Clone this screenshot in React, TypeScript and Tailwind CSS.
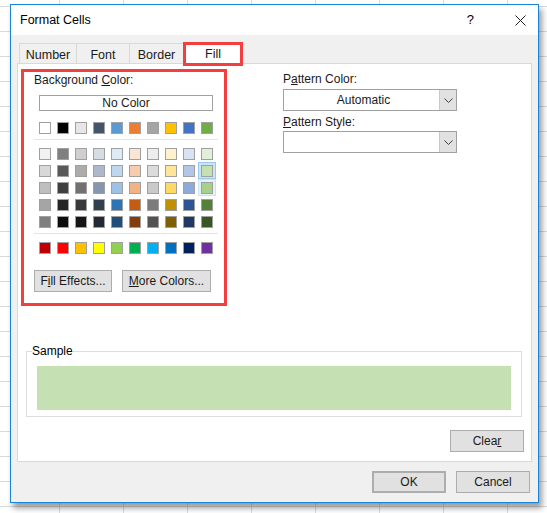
import React from "react";

const topRow = ["#ffffff", "#000000", "#e7e6e6", "#44546a", "#5b9bd5", "#ed7d31", "#a5a5a5", "#ffc000", "#4472c4", "#70ad47"];

const themeRows = [
  ["#f2f2f2", "#7f7f7f", "#d0cece", "#d6dce4", "#deebf6", "#fbe5d5", "#ededed", "#fff2cc", "#d9e2f3", "#e2efd9"],
  ["#d8d8d8", "#595959", "#aeabab", "#adb9ca", "#bdd7ee", "#f7cbac", "#dbdbdb", "#fee599", "#b4c6e7", "#c5e0b3"],
  ["#bfbfbf", "#3f3f3f", "#757070", "#8496b0", "#9cc3e5", "#f4b183", "#c9c9c9", "#ffd965", "#8eaadb", "#a8d08d"],
  ["#a5a5a5", "#262626", "#3a3838", "#323f4f", "#2e75b5", "#c55a11", "#7b7b7b", "#bf9000", "#2f5496", "#538135"],
  ["#7f7f7f", "#0c0c0c", "#171616", "#222a35", "#1e4e79", "#833c0b", "#525252", "#7f6000", "#1f3864", "#375623"],
];

const standard = ["#c00000", "#ff0000", "#ffc000", "#ffff00", "#92d050", "#00b050", "#00b0f0", "#0070c0", "#002060", "#7030a0"];

const Swatch = ({ color, state }: { color: string; state?: "selected" | "hover" }) => {
  const wrap =
    state === "selected"
      ? "bg-[#cce4f7] border-[#99c9ef]"
      : state === "hover"
      ? "bg-[#e5f1fb] border-[#cce4f7]"
      : "border-transparent";
  return (
    <div className={`w-[18px] h-[17px] flex items-center justify-center border ${wrap}`}>
      <div className="w-[12px] h-[12px] border border-[#a0a0a0]" style={{ backgroundColor: color }} />
    </div>
  );
};

const SwatchRow = ({ colors, selected, hover }: { colors: string[]; selected?: number; hover?: number }) => (
  <div className="flex ml-[12px]">
    {colors.map((c, i) => (
      <Swatch key={i} color={c} state={i === selected ? "selected" : i === hover ? "hover" : undefined} />
    ))}
  </div>
);

const Chevron = () => (
  <svg width="9" height="5" viewBox="0 0 9 5" className="block">
    <polyline points="0.5,0.5 4.5,4.5 8.5,0.5" fill="none" stroke="#404040" strokeWidth="1" />
  </svg>
);

const Select = ({ value }: { value?: string }) => (
  <div className="w-[174px] h-[22px] border border-[#a0a0a0] bg-white flex">
    <div className="flex-1 flex items-center justify-center pl-[4px]">{value}</div>
    <div className="w-[17px] bg-[#e1e1e1] border-l border-[#c8c8c8] flex items-center justify-center">
      <Chevron />
    </div>
  </div>
);

const Button = ({ children, className = "" }: { children: React.ReactNode; className?: string }) => (
  <div className={`h-[22px] bg-[#e1e1e1] border border-[#adadad] flex items-center justify-center ${className}`}>
    {children}
  </div>
);

export default function App() {
  return (
    <div className="relative w-[547px] h-[513px] overflow-hidden bg-white font-['Liberation_Sans',Arial,sans-serif] text-[12px] text-[#1a1a1a]">
      {/* spreadsheet behind */}
      <div className="absolute left-[-4px] top-[-18px] grid grid-cols-[repeat(9,64px)]">
        {Array.from({ length: 9 * 22 }).map((_, i) => (
          <div key={i} className="h-[25px] border-r border-b border-[#dadada]" />
        ))}
      </div>

      {/* dialog */}
      <div className="absolute left-[10px] top-[4px] w-[529px] h-[499px] border border-[#1883d7] bg-[#f0f0f0] flex flex-col shadow-[3px_5px_6px_rgba(0,0,0,0.4)]">
        <div className="h-[30px] bg-white flex items-center pl-[9px] shrink-0">
          <span className="text-[12.5px] text-black">Format Cells</span>
          <span className="ml-auto text-[13px] text-black mr-[41px]">?</span>
          <svg width="11" height="11" viewBox="0 0 11 11" className="mr-[12px]">
            <path d="M0.5 0.5 L10.5 10.5 M10.5 0.5 L0.5 10.5" stroke="#202020" strokeWidth="1" />
          </svg>
        </div>

        <div className="px-[6px] pt-[7px] flex flex-col">
          {/* tabs */}
          <div className="flex items-end h-[21px] pl-[2px] relative z-10">
            <div className="w-[57px] h-[20px] pt-[3px] flex items-center justify-center border-t border-l border-[#d9d9d9] text-[12.5px]">Number</div>
            <div className="w-[53px] h-[20px] pt-[3px] flex items-center justify-center border-t border-l border-[#d9d9d9] text-[12.5px]">Font</div>
            <div className="w-[55px] h-[20px] pt-[3px] flex items-center justify-center border-t border-l border-r border-[#d9d9d9] text-[12.5px]">Border</div>
            <div className="w-[60px] h-[24px] pt-[1px] -ml-[1px] mb-[-3px] bg-white border-[3px] border-[#f43f3f] flex items-center justify-center text-[12.5px]">Fill</div>
          </div>

          {/* panel */}
          <div className="h-[399px] bg-white border border-[#d9d9d9] flex flex-col">
            <div className="flex pt-[5px] pl-[3px]">
              {/* background color box */}
              <div className="w-[206px] h-[237px] border-[3px] border-[#f43f3f] flex flex-col">
                <div className="ml-[10px] mt-[1px] h-[15px] leading-[15px]">
                  Background <u>C</u>olor:
                </div>
                <div className="ml-[15px] mt-[7px] w-[174px] h-[16px] border border-[#a0a0a0] bg-white flex items-center justify-center">
                  No Color
                </div>
                <div className="mt-[8px]">
                  <SwatchRow colors={topRow} />
                </div>
                <div className="ml-[10px] mt-[3px] w-[184px] h-px bg-[#e3e3e3]" />
                <div className="mt-[5px] flex flex-col">
                  {themeRows.map((r, i) => (
                    <SwatchRow key={i} colors={r} selected={i === 1 ? 9 : undefined} hover={i === 2 ? 9 : undefined} />
                  ))}
                </div>
                <div className="ml-[10px] mt-[3px] w-[184px] h-px bg-[#e3e3e3]" />
                <div className="mt-[5px]">
                  <SwatchRow colors={standard} />
                </div>
                <div className="flex ml-[10px] mt-[14px] gap-[10px]">
                  <Button className="w-[78px]">
                    F<u>i</u>ll Effects...
                  </Button>
                  <Button className="w-[89px]">
                    <u>M</u>ore Colors...
                  </Button>
                </div>
              </div>

              {/* pattern */}
              <div className="ml-[56px] mt-[3px] flex flex-col">
                <div className="h-[15px] leading-[15px]">
                  P<u>a</u>ttern Color:
                </div>
                <div className="mt-[2px]">
                  <Select value="Automatic" />
                </div>
                <div className="mt-[4px] h-[15px] leading-[15px]">
                  <u>P</u>attern Style:
                </div>
                <div className="mt-[1px]">
                  <Select />
                </div>
              </div>
            </div>

            {/* sample */}
            <fieldset className="ml-[8px] mt-[38px] w-[496px] h-[73px] border border-[#dcdcdc] px-[10px] pb-[6px]">
              <legend className="ml-[-5px] px-0 leading-[15px] text-black">Sample</legend>
              <div className="mt-[7px] h-[44px] bg-[#c5e0b3]" />
            </fieldset>

            <div className="flex justify-end mt-[13px] pr-[7px]">
              <Button className="w-[74px]">
                Clea<u>r</u>
              </Button>
            </div>
          </div>

          {/* footer */}
          <div className="flex justify-end mt-[9px] gap-[10px] pr-[2px]">
            <Button className="w-[74px] border-2 border-[#0078d7]">OK</Button>
            <Button className="w-[74px]">Cancel</Button>
          </div>
        </div>
      </div>
    </div>
  );
}
